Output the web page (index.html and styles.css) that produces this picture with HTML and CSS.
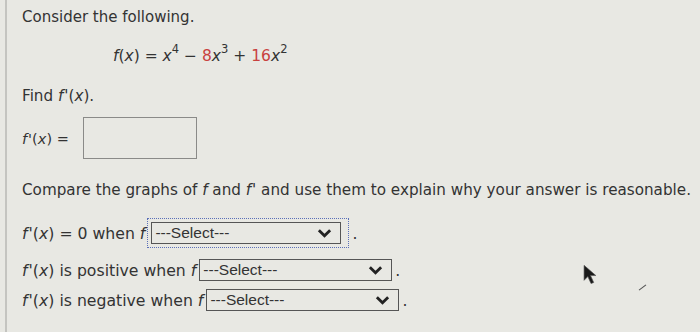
FILE: index.html
```html
<!DOCTYPE html>
<html>
<head>
<meta charset="utf-8">
<link rel="stylesheet" href="styles.css">
</head>
<body>
<div class="page">
  <div class="rule"></div>
  <div class="content">
    <p class="intro">Consider the following.</p>
    <div class="formula"><i>f</i>(<i>x</i>) = <i>x</i><sup>4</sup> &minus; <span class="red">8</span><i>x</i><sup>3</sup> + <span class="red">16</span><i>x</i><sup>2</sup></div>
    <p class="find">Find <i>f</i><i class="pr">'</i>(<i>x</i>).</p>
    <div class="answer">
      <span class="lbl"><i>f</i><i class="pr">'</i>(<i>x</i>) =</span>
      <span class="box"></span>
    </div>
    <p class="compare">Compare the graphs of <i>f</i> and <i>f</i><i class="pr">'</i> and use them to explain why your answer is reasonable.</p>
    <div class="row r1">
      <span><i>f</i><i class="pr">'</i>(<i>x</i>) = 0 when <i>f</i></span>
      <span class="focus"><span class="sel">---Select---<svg class="chev" viewBox="0 0 16 10"><path d="M2 2 L8 8 L14 2" fill="none" stroke="#222" stroke-width="3"/></svg></span></span>
      <span class="dot">.</span>
    </div>
    <div class="row r2">
      <span><i>f</i><i class="pr">'</i>(<i>x</i>) is positive when <i>f</i></span>
      <span class="sel">---Select---<svg class="chev" viewBox="0 0 16 10"><path d="M2 2 L8 8 L14 2" fill="none" stroke="#222" stroke-width="3"/></svg></span>
      <span class="dot">.</span>
    </div>
    <div class="row r3">
      <span><i>f</i><i class="pr">'</i>(<i>x</i>) is negative when <i>f</i></span>
      <span class="sel">---Select---<svg class="chev" viewBox="0 0 16 10"><path d="M2 2 L8 8 L14 2" fill="none" stroke="#222" stroke-width="3"/></svg></span>
      <span class="dot">.</span>
    </div>
  </div>
  <svg class="cursor" viewBox="0 0 14 20"><path d="M1 1 L1 15 L4.5 11.5 L7.5 18 L10 17 L7 10.5 L12 10.5 Z" fill="#1a1a1a" stroke="#555" stroke-width="0.6"/></svg>
  <svg class="scratch" viewBox="0 0 10 8"><path d="M1 7 L9 1" stroke="#555" stroke-width="1.3"/></svg>
</div>
</body>
</html>
```
FILE: styles.css
```css
html, body {
  margin: 0;
  padding: 0;
}
body {
  width: 700px;
  height: 332px;
  overflow: hidden;
  background: #e8e8e3;
  font-family: "DejaVu Sans", Verdana, sans-serif;
  color: #333;
}
.page {
  position: relative;
  display: flex;
  height: 332px;
}
.rule {
  width: 2px;
  margin-left: 5px;
  background: #c4c4c0;
  height: 100%;
}
.content {
  padding-left: 15px;
  font-size: 15.2px;
}
p { margin: 0; }
.pr { margin-left: 1px; margin-right: 0; }
.intro {
  font-size: 15px;
  height: 34px;
  line-height: 34px;
}
.formula {
  margin-left: 91px;
  margin-top: 2px;
  font-size: 15.5px;
  height: 40px;
  line-height: 40px;
}
.formula sup {
  font-size: 11.5px;
  vertical-align: 8px;
  line-height: 0;
}
.red { color: #c8413e; }
.find {
  height: 40px;
  line-height: 40px;
}
.answer {
  display: flex;
  align-items: center;
  height: 43px;
}
.lbl { font-size: 14.5px; width: 61px; margin-top: 2px; }
.box {
  width: 112px;
  height: 40px;
  border: 1px solid #8a8a88;
}
.compare {
  margin-top: 20px;
  line-height: 22px;
}
.row {
  display: flex;
  align-items: center;
  white-space: pre;
  font-size: 15.7px;
}
.r1 { margin-top: 16px; height: 32px; }
.r2 { margin-top: 10px; height: 22px; }
.r3 { margin-top: 8px; height: 22px; }
.focus {
  margin-left: 2px;
  padding: 3px 7px 3px 3px;
  border: 1px dotted #5a6fb8;
}
.sel {
  display: flex;
  align-items: center;
  justify-content: space-between;
  box-sizing: border-box;
  width: 193px;
  height: 22px;
  padding: 0 8px 0 3px;
  border: 1px solid #555;
  font-family: "Liberation Sans", Arial, sans-serif;
  font-size: 15.5px;
  color: #333;
  margin-left: 3px;
}
.focus .sel { margin-left: 0; width: 190px; }
.chev { width: 15px; height: 10px; }
.dot { margin-left: 3px; }
.cursor {
  position: absolute;
  left: 583px;
  top: 264px;
  width: 15px;
  height: 22px;
}
.scratch {
  position: absolute;
  left: 638px;
  top: 284px;
  width: 9px;
  height: 7px;
}
```
